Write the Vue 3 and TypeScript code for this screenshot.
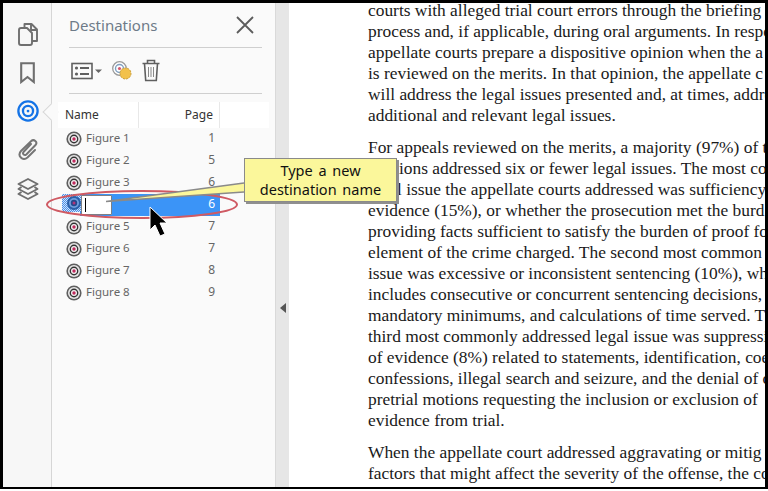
<script setup lang="ts">
interface Row { name: string; page: number; editing?: boolean }
const rows: Row[] = [
  { name: 'Figure 1', page: 1 },
  { name: 'Figure 2', page: 5 },
  { name: 'Figure 3', page: 6 },
  { name: '', page: 6, editing: true },
  { name: 'Figure 5', page: 7 },
  { name: 'Figure 6', page: 7 },
  { name: 'Figure 7', page: 8 },
  { name: 'Figure 8', page: 9 },
]
const paragraphs: string[][] = [
  [
    'courts with alleged trial court errors through the briefing',
    'process and, if applicable, during oral arguments. In respo',
    'appellate courts prepare a dispositive opinion when the a',
    'is reviewed on the merits. In that opinion, the appellate c',
    'will address the legal issues presented and, at times, addre',
    'additional and relevant legal issues.',
  ],
  [
    'For appeals reviewed on the merits, a majority (97%) of t',
    'opinions addressed six or fewer legal issues. The most cor',
    'legal issue the appellate courts addressed was sufficiency',
    'evidence (15%), or whether the prosecution met the burd',
    'providing facts sufficient to satisfy the burden of proof fo',
    'element of the crime charged. The second most common',
    'issue was excessive or inconsistent sentencing (10%), whi',
    'includes consecutive or concurrent sentencing decisions,',
    'mandatory minimums, and calculations of time served. T',
    'third most commonly addressed legal issue was suppressi',
    'of evidence (8%) related to statements, identification, coe',
    'confessions, illegal search and seizure, and the denial of c',
    'pretrial motions requesting the inclusion or exclusion of',
    'evidence from trial.',
  ],
  [
    'When the appellate court addressed aggravating or mitig',
    'factors that might affect the severity of the offense, the co',
    'found sentencing errors and the appellate court decided',
  ],
]
</script>

<template>
  <div class="frame">
    <nav class="rail">
      <svg width="20" height="23" viewBox="0 0 20 23" fill="none" stroke="#6f6f6f" stroke-width="1.900" stroke-linejoin="round">
        <path d="M6.500 5V1h7l5.500 5.500V18h-5" />
        <path d="M13 1v6h6" />
        <path d="M1 7c0-1 .5-2 2-2h6l5 5v10c0 1.500-.5 2-2 2H3c-1.500 0-2-.5-2-2z" />
      </svg>
      <svg width="15" height="22" viewBox="0 0 15 22" fill="none" stroke="#6f6f6f" stroke-width="2.100">
        <path d="M1.200 1.200h12.600v18.800l-6.300-5-6.300 5z" />
      </svg>
      <svg width="22" height="22" viewBox="0 0 24 24" fill="none" stroke="#1473e6">
        <circle cx="12" cy="12" r="10.500" stroke-width="2.500" />
        <circle cx="12" cy="12" r="5.500" stroke-width="2.500" />
        <circle cx="12" cy="12" r="1.500" fill="#1473e6" stroke="none" />
      </svg>
      <svg width="22" height="22" viewBox="0 0 22 22" fill="none" stroke="#757575" stroke-width="2" stroke-linecap="round">
        <path d="M14 6 6.500 14c-1.500 2 1 4 2.800 2.500L18.500 7c2.500-3-1.500-6.500-4.500-3.800L4 13c-4 4.500 1.500 10.500 6.500 6.500L18 12" />
      </svg>
      <svg class="layers" width="22" height="22" viewBox="0 0 22 22" fill="none" stroke="#6f6f6f" stroke-width="1.900" stroke-linejoin="round">
        <path d="M11 1 20.500 6 11 11 1.500 6z" />
        <path d="M4.500 9 1.500 11 11 16l9.500-5-3-2" />
        <path d="M4.500 14 1.500 16 11 21l9.500-5-3-2" />
      </svg>
    </nav>

    <aside class="panel">
      <header class="panel-head">
        <span class="panel-title">Destinations</span>
        <svg width="18" height="18" viewBox="0 0 18 18" stroke="#5c5c5c" stroke-width="1.800">
          <path d="M1 1l16 16M17 1 1 17" />
        </svg>
      </header>
      <div class="toolbar">
        <svg width="32" height="18" viewBox="0 0 32 18" fill="none">
          <rect x="1" y="1.500" width="20" height="15" stroke="#5f5f5f" stroke-width="1.600" />
          <circle cx="5.500" cy="6" r="1.600" fill="#5f5f5f" />
          <circle cx="5.500" cy="12" r="1.600" fill="#5f5f5f" />
          <path d="M9 6h9M9 12h9" stroke="#5f5f5f" stroke-width="1.800" />
          <path d="M24 7.500h7l-3.500 3.500z" fill="#666" />
        </svg>
        <svg width="20" height="19" viewBox="0 0 20 19" fill="none">
          <circle cx="7.500" cy="7.500" r="6.800" fill="#fff" stroke="#9a9a9a" stroke-width="1.300" />
          <circle cx="7.500" cy="7.500" r="4" stroke="#7f9fc0" stroke-width="1.400" />
          <circle cx="7.500" cy="7.500" r="1.600" fill="#d4566c" />
          <circle cx="13.500" cy="12.500" r="5.500" fill="#f2c14a" stroke="#c99c35" stroke-dasharray="2 1" />
        </svg>
        <svg class="trash" width="18" height="23" viewBox="0 0 18 23" fill="none" stroke="#5f5f5f" stroke-width="1.600">
          <path d="M.5 4.500h17M5.500 4.500V1.500h7v3M2.500 4.500l1.200 17h10.600l1.200-17" />
          <path d="M6.500 8v10M9 8v10M11.500 8v10" stroke-width="1" stroke="#888" />
        </svg>
      </div>
      <div class="table-head">
        <span class="col-name">Name</span>
        <span class="col-page">Page</span>
        <span class="col-rest"></span>
      </div>
      <ul class="rows">
        <li v-for="row in rows" :key="row.name + row.page" class="row" :class="{ editing: row.editing }">
          <span class="target-wrap">
            <svg width="16" height="16" viewBox="0 0 16 16" fill="none">
              <template v-if="row.editing">
                <circle cx="8" cy="8" r="7" fill="#2a5fa8" />
                <circle cx="8" cy="8" r="5" fill="#6f9ede" />
                <circle cx="8" cy="8" r="3.200" fill="#24498c" />
                <circle cx="8" cy="8" r="1.500" fill="#b0357a" />
              </template>
              <template v-else>
                <circle cx="8" cy="8" r="7.600" fill="#5e5e5e" />
                <circle cx="8" cy="8" r="6" fill="#e8e8e8" />
                <circle cx="8" cy="8" r="4.400" fill="#333" />
                <circle cx="8" cy="8" r="3" fill="#f4f4f4" />
                <circle cx="8" cy="8" r="1.700" fill="#c02a5c" />
              </template>
            </svg>
          </span>
          <span v-if="row.editing" class="name-input"><i class="caret"></i></span>
          <span v-else class="name">{{ row.name }}</span>
          <span class="page">{{ row.page }}</span>
        </li>
      </ul>
    </aside>

    <div class="gutter"><i class="handle"></i></div>

    <main class="doc">
      <p v-for="(para, i) in paragraphs" :key="i" class="para">
        <span v-for="line in para" :key="line" class="line">{{ line }}</span>
      </p>
    </main>

    <svg class="annotations" width="768" height="491" viewBox="0 0 768 491" fill="none">
      <ellipse cx="142" cy="204.500" rx="95" ry="13.500" stroke="#cf5a63" stroke-width="2" />
      <path d="M106 201.500 244 183v9z" fill="#fbf79b" />
      <path d="M106 201.500 244 183M106 201.500 244 192" stroke="#8a8a8a" stroke-width="1.500" />
      <path d="M150 207v23l5-5 5 11 5-2-5-11h7z" fill="#000" stroke="#fff" stroke-width="1" />
    </svg>
    <div class="callout">Type a new<br />destination name</div>
  </div>
</template>

<style>
html, body { margin: 0; background: #fff; }
</style>

<style scoped>
.frame {
  position: relative;
  box-sizing: border-box;
  width: 768px;
  height: 489px;
  border: 3px solid #000;
  border-bottom-width: 2px;
  box-shadow: 0 2px 1px #a0a0a0;
  display: flex;
  overflow: hidden;
  background: #fff;
  font-family: "Noto Sans", sans-serif;
}
.rail {
  width: 49px;
  flex: none;
  box-sizing: border-box;
  background: #f7f7f7;
  border-right: 1px solid #d6d6d6;
  display: flex;
  flex-direction: column;
  align-items: center;
  padding: 20px 0 0 1px;
  gap: 16px;
  position: relative;
}
.rail svg { display: block; flex: none; }
.rail .layers { margin-top: 2px; }
.rail::after {
  content: "";
  position: absolute;
  right: -6px;
  top: 103px;
  width: 11px;
  height: 11px;
  background: #fafafa;
  border-left: 1px solid #d6d6d6;
  border-bottom: 1px solid #d6d6d6;
  transform: rotate(45deg);
}
.panel {
  width: 224px;
  flex: none;
  box-sizing: border-box;
  background: #fafafa;
  border-right: 1px solid #d9d9d9;
  padding: 0 6px;
}
.panel-head {
  height: 44px;
  margin: 0 7px 0 11px;
  border-bottom: 1px solid #cfcfcf;
  display: flex;
  align-items: center;
  justify-content: space-between;
  padding-right: 8px;
}
.panel-title { font-size: 15px; color: #6e7a88; }
.toolbar {
  height: 46px;
  box-sizing: border-box;
  margin: 0 7px 0 11px;
  border-bottom: 1px solid #cfcfcf;
  display: flex;
  align-items: center;
  gap: 9px;
  padding-left: 2px;
}
.toolbar .trash { margin-left: 1px; }
.table-head {
  height: 26px;
  margin-top: 8px;
  background: #fff;
  display: flex;
  align-items: center;
  font-size: 12px;
  color: #333;
}
.col-name { width: 81px; box-sizing: border-box; padding-left: 7px; border-right: 1px solid #e8e8e8; line-height: 26px; }
.col-page { width: 81px; box-sizing: border-box; text-align: right; padding-right: 6px; border-right: 1px solid #e8e8e8; line-height: 26px; }
.col-rest { flex: 1; }
.rows { list-style: none; margin: 0; padding: 0; }
.row {
  height: 22px;
  width: 162px;
  display: flex;
  align-items: center;
  font-size: 11.500px;
  color: #666;
  padding-left: 4px;
  box-sizing: border-box;
  line-height: 18px;
}
.target-wrap {
  flex: none;
  width: 19px;
  height: 18px;
  margin-right: 5px;
  display: flex;
  align-items: center;
  justify-content: center;
}
.target-wrap svg { margin-left: 4px; flex: none; }
.name { flex: 1; padding-bottom: 3px; }
.page { margin-left: auto; padding-right: 5px; font-size: 12px; padding-bottom: 3px; }
.editing {
  color: #fff;
  background: linear-gradient(90deg, transparent 22px, #3b94f7 22px);
}
.editing .target-wrap {
  margin-top: -5px;
  background: repeating-conic-gradient(#4a90e8 0 25%, #cfe2fb 0 50%) 0 0 / 2px 2px;
}
.name-input {
  width: 31px;
  height: 20px;
  box-sizing: border-box;
  background: #fff;
  border: 1px solid #7c7f86;
  border-radius: 1px;
  display: flex;
  align-items: center;
  padding-left: 3px;
  margin-left: -5px;
}
.caret { width: 1px; height: 14px; background: #000; }
.gutter {
  width: 13px;
  flex: none;
  background: #e6e6e6;
  display: flex;
  align-items: center;
  justify-content: center;
  padding-top: 126px;
  box-sizing: border-box;
}
.handle {
  width: 0;
  height: 0;
  border-style: solid;
  border-width: 5px 6px 5px 0;
  border-color: transparent #555 transparent transparent;
}
.doc {
  flex: 1;
  min-width: 0;
  padding-left: 79px;
  margin-top: -3px;
  font-family: "Liberation Serif", serif;
  font-size: 17.400px;
  line-height: 21px;
  color: #1a1a1a;
  white-space: nowrap;
  overflow: hidden;
}
.para { margin: 0 0 11px; }
.line { display: block; }
.annotations { position: absolute; left: -3px; top: -3px; pointer-events: none; }
.callout {
  position: absolute;
  left: 241px;
  top: 155px;
  width: 153px;
  height: 44px;
  box-sizing: border-box;
  background: #fbf79b;
  border: 1px solid #8a8a8a;
  box-shadow: 2px 2px 0 #8f8f8f;
  font-size: 14.500px;
  line-height: 19px;
  text-align: center;
  color: #111;
  word-spacing: 2px;
  padding-top: 2px;
}
</style>
